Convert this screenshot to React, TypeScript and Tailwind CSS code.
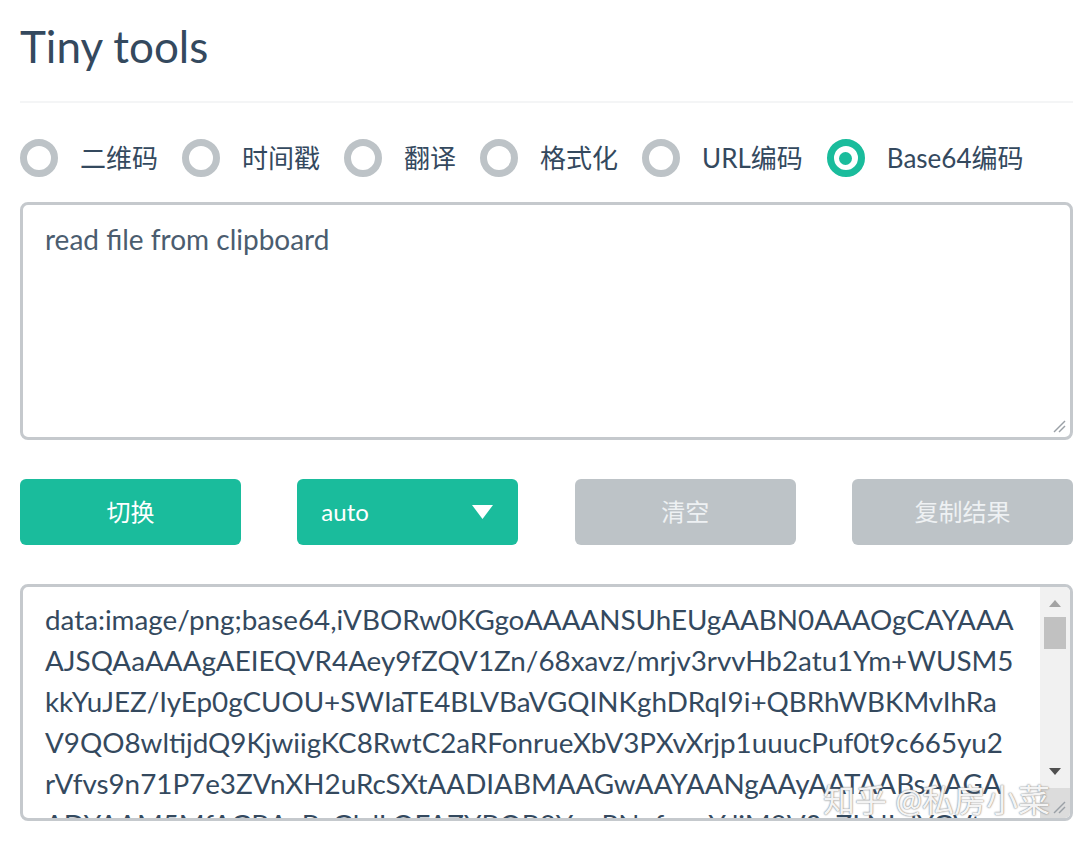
const radios = [
  { label: "二维码", checked: false },
  { label: "时间戳", checked: false },
  { label: "翻译", checked: false },
  { label: "格式化", checked: false },
  { label: "URL编码", checked: false },
  { label: "Base64编码", checked: true },
];

const lines = [
  "data:image/png;base64,iVBORw0KGgoAAAANSUhEUgAABN0AAAOgCAYAAA",
  "AJSQAaAAAgAEIEQVR4Aey9fZQV1Zn/68xavz/mrjv3rvvHb2atu1Ym+WUSM5",
  "kkYuJEZ/IyEp0gCUOU+SWIaTE4BLVBaVGQINKghDRqI9i+QBRhWBKMvIhRa",
  "V9QO8wltijdQ9KjwiigKC8RwtC2aRFonrueXbV3PXvXrjp1uuucPuf0t9c665yu2",
  "rVfvs9n71P7e3ZVnXH2uRcSXtAADIABMAAGwAAYAANgAAyAATAABsAAGA",
  "ADYAAM5MfAGBAeBcGlclLQFAZYBOB8YuuPNnfuuuYdiM8V0xZLNLdYGVt",
];

const font = { fontFamily: '"Lato", "Noto Sans CJK SC", sans-serif' };

function Radio({ label, checked }: { label: string; checked: boolean }) {
  return (
    <label className="flex items-center gap-[22px] cursor-pointer">
      <span
        className={
          checked
            ? "w-[38px] h-[38px] rounded-full border-[7px] border-[#1abc9c] bg-white flex items-center justify-center"
            : "w-[38px] h-[38px] rounded-full border-[7px] border-[#bdc3c7] bg-white"
        }
      >
        {checked && <span className="w-[13px] h-[13px] rounded-full bg-[#1abc9c]" />}
      </span>
      <span className="text-[26px] leading-[38px] text-[#34495e]">{label}</span>
    </label>
  );
}

function ResizeHandle() {
  return (
    <svg width="14" height="14" viewBox="0 0 14 14" className="absolute right-[4px] bottom-[4px]">
      <line x1="2" y1="13" x2="13" y2="2" stroke="#9aa0a6" strokeWidth="1.5" />
      <line x1="7" y1="13" x2="13" y2="7" stroke="#9aa0a6" strokeWidth="1.5" />
    </svg>
  );
}

export default function App() {
  return (
    <div className="min-h-screen bg-white px-5 pt-5" style={font}>
      <div className="w-[1053px]">
        {/* Header */}
        <h3 className="text-[44px] leading-[53px] text-[#34495e] font-normal">Tiny tools</h3>
        <div className="mt-[28px] h-[2px] bg-[#f4f5f6]" />

        {/* Tool switch */}
        <div className="mt-[36px] flex items-center gap-[24px]">
          {radios.map((r) => (
            <Radio key={r.label} label={r.label} checked={r.checked} />
          ))}
        </div>

        {/* Input */}
        <div className="relative mt-[25px] h-[238px] rounded-[8px] border-[3px] border-[#c5c9cd] bg-white pl-[22px] pt-[16px]">
          <div className="text-[28px] leading-[36px] text-[#4b5d6f]">read file from clipboard</div>
          <ResizeHandle />
        </div>

        {/* Actions */}
        <div className="mt-[39px] flex justify-between">
          <button className="w-[221px] h-[66px] rounded-[6px] bg-[#1abc9c] text-white text-[24px]">切换</button>
          <button className="w-[221px] h-[66px] rounded-[6px] bg-[#1abc9c] text-white text-[24px] flex items-center justify-between pl-[24px] pr-[25px]">
            <span>auto</span>
            <svg width="21" height="14" viewBox="0 0 21 14">
              <path d="M0 0 H21 L10.5 14 Z" fill="white" />
            </svg>
          </button>
          <button className="w-[221px] h-[66px] rounded-[6px] bg-[#bdc3c7] text-[#eef1f3] text-[24px]">清空</button>
          <button className="w-[221px] h-[66px] rounded-[6px] bg-[#bdc3c7] text-[#eef1f3] text-[24px]">复制结果</button>
        </div>

        {/* Output */}
        <div className="relative mt-[39px] h-[237px] rounded-[8px] border-[3px] border-[#c5c9cd] bg-white overflow-hidden">
          <div className="pl-[22px] pt-[12px] pr-[40px] text-[27.8px] leading-[41px] text-[#34495e] whitespace-pre">
            {lines.map((l, i) => (
              <div key={i}>{l}</div>
            ))}
          </div>

          {/* scrollbar */}
          <div className="absolute right-0 top-0 bottom-0 w-[30px] bg-[#f1f1f1] flex flex-col items-center">
            <svg width="12" height="8" viewBox="0 0 12 8" className="mt-[12px]">
              <path d="M0 8 L6 1 L12 8 Z" fill="#a3a3a3" />
            </svg>
            <div className="mt-[10px] w-[22px] h-[32px] bg-[#c1c1c1]" />
            <div className="flex-1" />
            <svg width="12" height="8" viewBox="0 0 12 8" className="mb-[42px]">
              <path d="M0 0 L12 0 L6 7 Z" fill="#505050" />
            </svg>
          </div>
          <div className="absolute right-0 bottom-0 w-[30px] h-[30px] bg-[#dcdcdc]" />
          <ResizeHandle />

          {/* watermark */}
          <div
            className="absolute left-[800px] bottom-[-2px] text-[32px] leading-[40px] text-white/90"
            style={{ textShadow: "0 0 2px #8a8a8a, 0 0 1px #8a8a8a" }}
          >
            知乎 @私房小菜
          </div>
        </div>
      </div>
    </div>
  );
}
